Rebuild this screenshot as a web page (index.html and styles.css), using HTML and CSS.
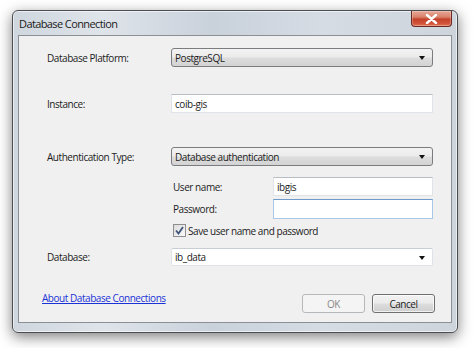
FILE: index.html
```html
<!DOCTYPE html>
<html>
<head>
<meta charset="utf-8">
<link rel="stylesheet" href="styles.css">
</head>
<body>
<div class="window">
  <div class="titlebar">
    <span class="title">Database Connection</span>
    <div class="close">
      <svg width="13" height="10" viewBox="0 0 13 10"><path d="M2 1 L11 9 M11 1 L2 9" stroke="#fff" stroke-width="2.4" stroke-linecap="round"/></svg>
    </div>
  </div>
  <div class="panel">
    <div class="row r-platform">
      <span class="label">Database Platform:</span>
      <div class="combo ro"><span>PostgreSQL</span><i class="arrow"></i></div>
    </div>
    <div class="row r-instance">
      <span class="label">Instance:</span>
      <div class="input"><span>coib-gis</span></div>
    </div>
    <div class="row r-auth">
      <span class="label">Authentication Type:</span>
      <div class="combo ro"><span>Database authentication</span><i class="arrow"></i></div>
    </div>
    <div class="sub">
      <div class="subrow r-user">
        <span class="sublabel">User name:</span>
        <div class="input"><span>ibgis</span></div>
      </div>
      <div class="subrow r-pass">
        <span class="sublabel">Password:</span>
        <div class="input focus"></div>
      </div>
      <div class="check-row">
        <span class="checkbox"><svg width="9" height="9" viewBox="0 0 9 9"><path d="M1 4.5 L3.5 7.5 L8 1" fill="none" stroke="#3f5478" stroke-width="1.8"/></svg></span>
        <span>Save user name and password</span>
      </div>
    </div>
    <div class="row r-db">
      <span class="label">Database:</span>
      <div class="combo ed"><span>ib_data</span><i class="arrow"></i></div>
    </div>
    <div class="footer">
      <a class="link" href="#">About Database Connections</a>
      <div class="buttons">
        <div class="btn disabled">OK</div>
        <div class="btn">Cancel</div>
      </div>
    </div>
  </div>
</div>
</body>
</html>
```

FILE: styles.css
```css
html, body {
  margin: 0;
  padding: 0;
  background: #ffffff;
}
body {
  width: 474px;
  height: 348px;
  overflow: hidden;
  font-family: "Open Sans", "Noto Sans", sans-serif;
  font-size: 10px;
  letter-spacing: -0.45px;
  color: #1c1c1c;
}
.window {
  margin: 10px 0 0 12px;
  width: 446px;
  height: 323px;
  box-sizing: border-box;
  border: 1px solid #4a4d52;
  border-radius: 6px;
  background: linear-gradient(90deg, #cfd6de 0%, #dfe4ea 20%, #c9d1db 45%, #d5dce4 70%, #cdd4dc 100%);
  box-shadow: 0 4px 14px rgba(0,0,0,0.5), inset 0 0 0 1px rgba(255,255,255,0.6);
  display: flex;
  flex-direction: column;
  padding: 0 5px 9px 5px;
}
.titlebar {
  height: 24px;
  display: flex;
  align-items: flex-start;
  justify-content: space-between;
  flex-shrink: 0;
}
.title {
  margin-top: 5px;
  margin-left: 1px;
  font-size: 11px;
  letter-spacing: -0.6px;
  color: #1a1a1a;
}
.close {
  width: 41px;
  height: 16px;
  box-sizing: border-box;
  border: 1px solid #6b2a20;
  border-top: none;
  border-radius: 0 0 4px 4px;
  background: linear-gradient(180deg, #e6a896 0%, #d9826c 40%, #c4412a 55%, #d2553c 85%, #e07a5e 100%);
  display: flex;
  align-items: center;
  justify-content: center;
  box-shadow: inset 0 0 0 1px rgba(255,255,255,0.25);
}
.panel {
  flex: 1;
  background: #f0f0f0;
  border: 1px solid #8b9097;
  display: flex;
  flex-direction: column;
  padding: 12px 18px 0 28px;
}
.row {
  display: flex;
  align-items: center;
}
.label {
  width: 124px;
  flex-shrink: 0;
}
.combo, .input {
  flex: 1;
  box-sizing: border-box;
  display: flex;
  align-items: center;
  padding: 0 3px;
}
.combo {
  height: 19px;
  border: 1px solid #7a7c80;
  border-radius: 3px;
  justify-content: space-between;
}
.combo.ro {
  background: linear-gradient(180deg, #f3f3f3 0%, #ebebeb 48%, #dddddd 52%, #d3d3d3 100%);
}
.combo.ed {
  background: #ffffff;
  border: 1px solid #dfe3e8;
  border-top-color: #c9ced4;
  border-radius: 2px;
}
.arrow {
  width: 0;
  height: 0;
  border-left: 3.5px solid transparent;
  border-right: 3.5px solid transparent;
  border-top: 4px solid #111;
  margin-right: 4px;
  margin-top: 1px;
}
.input {
  height: 19px;
  background: #ffffff;
  border: 1px solid #e0e4e9;
  border-top-color: #b8bdc4;
}
.input.focus {
  border: 1px solid #a9c8e8;
  border-top-color: #6e9ccc;
}
.r-instance { margin-top: 27px; }
.r-auth { margin-top: 34px; }
.sub {
  margin-left: 126px;
  display: flex;
  flex-direction: column;
}
.subrow {
  display: flex;
  align-items: center;
}
.sublabel {
  width: 100px;
  flex-shrink: 0;
}
.r-user { margin-top: 11px; }
.r-pass { margin-top: 3px; }
.r-pass .input { height: 20px; }
.check-row {
  display: flex;
  align-items: center;
  margin-top: 5px;
  height: 13px;
}
.checkbox {
  width: 13px;
  height: 13px;
  box-sizing: border-box;
  border: 1px solid #8f8f8f;
  background: linear-gradient(135deg, #dcdcdc, #fbfbfb);
  display: flex;
  align-items: center;
  justify-content: center;
  margin-right: 2px;
}
.r-db { margin-top: 11px; }
.r-db .combo { height: 18px; }
.footer {
  display: flex;
  justify-content: space-between;
  align-items: flex-start;
  margin-top: 25px;
  margin-left: -5px;
}
.link {
  color: #1b33d6;
  text-decoration: underline;
}
.buttons {
  display: flex;
  gap: 7px;
  margin-top: 3px;
  margin-right: -2px;
}
.btn {
  width: 63px;
  height: 19px;
  box-sizing: border-box;
  border: 1px solid #707070;
  border-radius: 3px;
  background: linear-gradient(180deg, #f2f2f2 0%, #ebebeb 48%, #dddddd 52%, #cfcfcf 100%);
  display: flex;
  align-items: center;
  justify-content: center;
  box-shadow: inset 0 0 0 1px rgba(255,255,255,0.7);
}
.btn.disabled {
  background: #f4f4f4;
  border-color: #b5b8bb;
  color: #8a8a8a;
  box-shadow: none;
}
```
